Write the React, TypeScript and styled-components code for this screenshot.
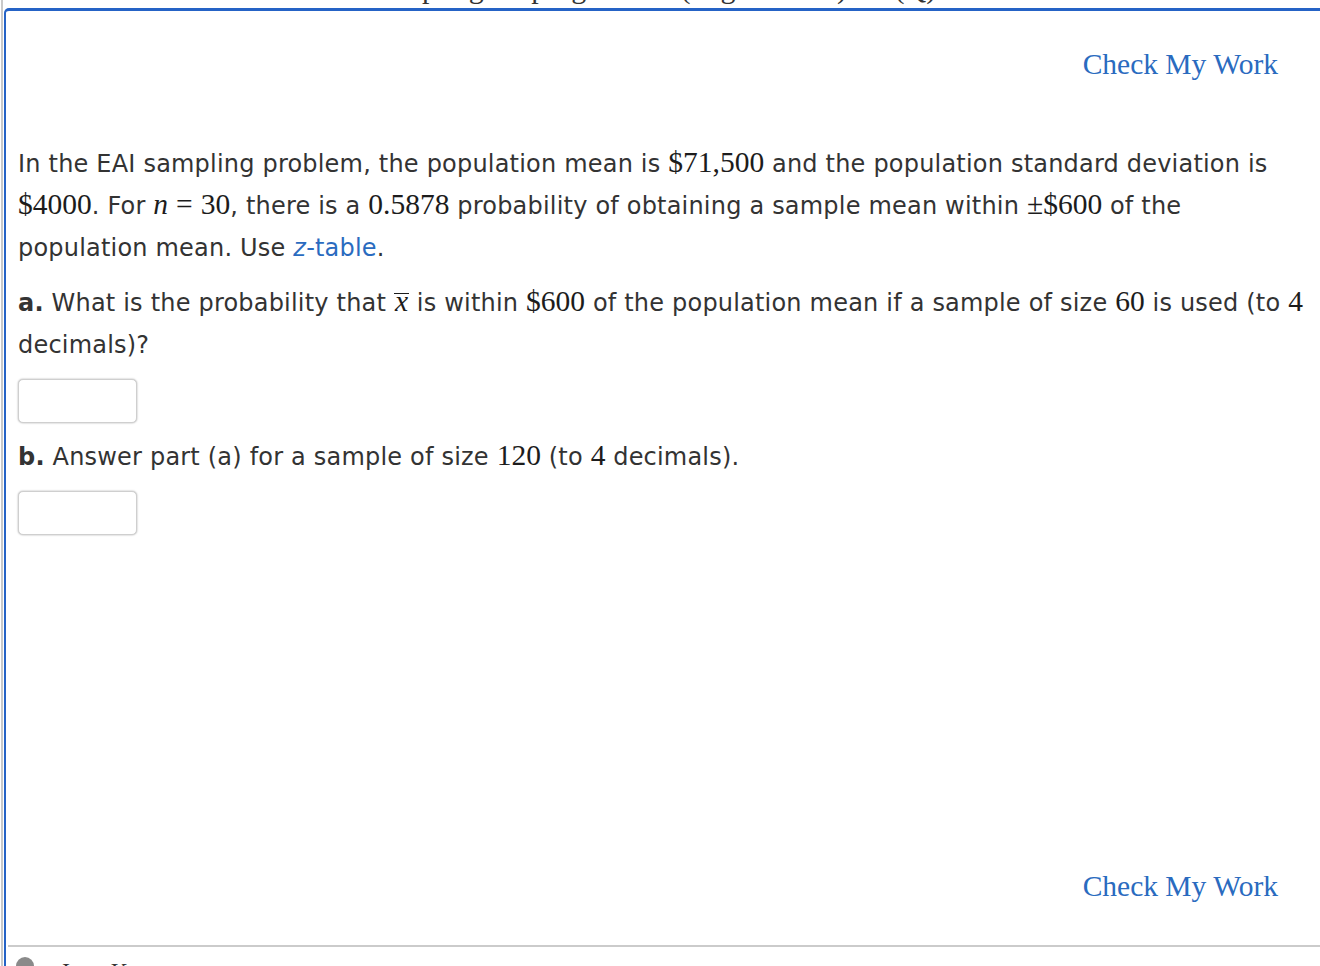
import styled, { createGlobalStyle } from 'styled-components'

const GlobalStyle = createGlobalStyle`
  html, body {
    margin: 0;
    padding: 0;
    background: #fff;
    overflow: hidden;
  }
  body {
    font-family: "DejaVu Sans", Verdana, sans-serif;
    color: #333;
  }
`

const Shell = styled.div`
  margin-left: 1px;
  border-left: 2px solid #c9c9c9;
  height: 1100px;
`

const TitleStrip = styled.div`
  height: 8px;
  overflow: hidden;
`

const TitleText = styled.div`
  font-family: "Liberation Serif", serif;
  font-size: 30px;
  line-height: 34px;
  color: #333;
  white-space: nowrap;
  margin-top: -29px;
  padding-left: 120px;
  word-spacing: 40px;
`

const Card = styled.div`
  margin-left: 1px;
  border-top: 3px solid #2563c6;
  border-left: 2px solid #2563c6;
  border-top-left-radius: 5px;
  display: flex;
  flex-direction: column;
  height: 973px;
`

const CheckRow = styled.div<{ $top: number }>`
  display: flex;
  justify-content: flex-end;
  padding-right: 42px;
  margin-top: ${p => p.$top}px;
`

const CheckLink = styled.a`
  font-family: "Liberation Serif", Georgia, serif;
  font-size: 29.5px;
  line-height: 34px;
  color: #2a6bbf;
  text-decoration: none;
  cursor: pointer;
`

const Body = styled.div`
  padding: 62px 12px 0 12px;
  font-size: 24px;
  letter-spacing: 0.2px;
  line-height: 42px;
`

const Para = styled.p`
  margin: 0 0 13px;
`

const M = styled.span<{ $italic?: boolean }>`
  font-family: "Liberation Serif", "Times New Roman", serif;
  font-size: 29.5px;
  line-height: 30px;
  letter-spacing: 0;
  color: #1c1c1c;
  font-style: ${p => (p.$italic ? 'italic' : 'normal')};
`

const Rel = styled.span`
  margin: 0 8px;
`

const Bar = styled.span`
  display: inline-block;
  line-height: 15px;
  border-top: 1.5px solid #1c1c1c;
  padding: 0 1px;
`

const Link = styled.a`
  color: #2a6bbf;
  text-decoration: none;
`

const Label = styled.b`
  font-weight: 700;
`

const AnswerBox = styled.input`
  display: block;
  box-sizing: border-box;
  width: 119px;
  height: 44px;
  margin: 0 0 13px 0;
  border: 1px solid #cfcfcf;
  border-radius: 5px;
  box-shadow: 0 0 2px rgba(0, 0, 0, 0.35);
  background: #fff;
  outline: none;
`

const Spacer = styled.div`
  flex: 1;
`

const Footer = styled.div`
  margin-left: 2px;
  margin-top: 42px;
  border-top: 2px solid #cbcbcb;
  padding: 10px 0 3px 8px;
  display: flex;
  align-items: flex-start;
  gap: 28px;
  font-family: "Liberation Serif", Georgia, serif;
  font-size: 24px;
  line-height: 20px;
  color: #333;
`

const Dot = styled.span`
  width: 18px;
  height: 18px;
  border-radius: 50%;
  background: #8a8a8a;
  display: inline-block;
`

const FooterLabel = styled.span`
  margin-top: 4px;
`

export default function App() {
  return (
    <>
      <GlobalStyle />
      <Shell>
        <TitleStrip>
          <TitleText>Exercise 7.23 sampling program (Algorithmic) (Q)</TitleText>
        </TitleStrip>
        <Card>
          <CheckRow $top={36}>
            <CheckLink>Check My Work</CheckLink>
          </CheckRow>
          <Body>
            <Para>
              In the EAI sampling problem, the population mean is <M>$71,500</M> and the population standard deviation is{' '}
              <M>$4000</M>. For <M $italic>n</M><M><Rel>=</Rel>30</M>, there is a <M>0.5878</M> probability of obtaining a sample mean
              within <M>±$600</M> of the population mean. Use <Link><i>z</i>-table</Link>.
            </Para>
            <Para>
              <Label>a.</Label> What is the probability that <M $italic><Bar>x</Bar></M> is within <M>$600</M> of the population mean if a
              sample of size <M>60</M> is used (to <M>4</M> decimals)?
            </Para>
            <AnswerBox />
            <Para>
              <Label>b.</Label> Answer part (a) for a sample of size <M>120</M> (to <M>4</M> decimals).
            </Para>
            <AnswerBox />
          </Body>
          <Spacer />
          <CheckRow $top={0}>
            <CheckLink>Check My Work</CheckLink>
          </CheckRow>
          <Footer>
            <Dot />
            <FooterLabel>Icon Key</FooterLabel>
          </Footer>
        </Card>
      </Shell>
    </>
  )
}
